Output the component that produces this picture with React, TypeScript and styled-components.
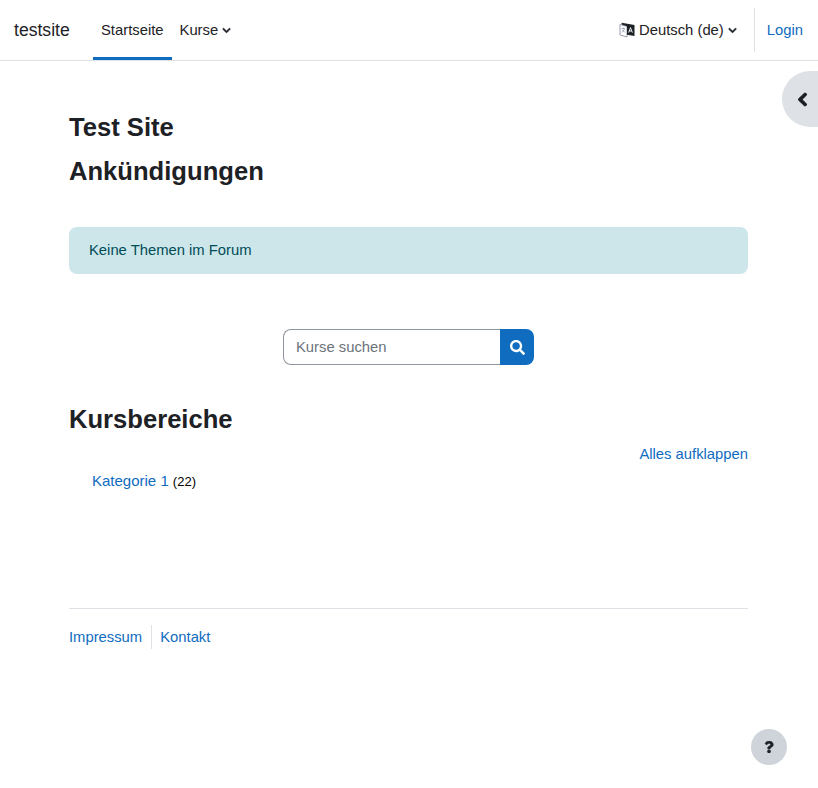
import React from 'react';
import styled, { createGlobalStyle } from 'styled-components';
import { FaChevronDown, FaChevronLeft, FaQuestion, FaSearch } from 'react-icons/fa';

const GlobalStyle = createGlobalStyle`
  html, body {
    margin: 0;
    padding: 0;
    background: #fff;
  }
  body {
    font-family: "Liberation Sans", Arial, sans-serif;
    font-size: 14.8px;
    line-height: 22.5px;
    color: #1d2125;
  }
`;

const Page = styled.div`
  position: relative;
  width: 818px;
  height: 788px;
  overflow: hidden;
`;

const Navbar = styled.nav`
  display: flex;
  align-items: stretch;
  height: 60px;
  border-bottom: 1px solid #dee2e6;
  padding-left: 14px;
`;

const Brand = styled.div`
  display: flex;
  align-items: center;
  width: 56px;
  font-size: 17.6px;
  margin-right: 23px;
`;

const NavItem = styled.div<{ $active?: boolean }>`
  display: flex;
  align-items: center;
  gap: 4px;
  padding: 3px 8px 0;
  border-bottom: 3px solid ${p => (p.$active ? '#0f6cbf' : 'transparent')};
  box-sizing: border-box;
  height: 60px;
`;

const Spacer = styled.div`
  flex: 1;
`;

const LangMenu = styled.div`
  display: flex;
  align-items: center;
  gap: 4px;
  padding-right: 17px;
`;

const LoginBox = styled.div`
  display: flex;
  align-items: center;
  align-self: center;
  height: 44px;
  padding: 0 15px 0 12px;
  border-left: 1px solid #dee2e6;
`;

const Anchor = styled.a`
  color: #0f6cbf;
  text-decoration: none;
`;

const Main = styled.main`
  padding: 51px 70px 0 69px;
`;

const Heading = styled.h2`
  margin: 0;
  font-size: 25.6px;
  line-height: 30px;
  font-weight: 700;
  color: #1d2125;
`;

const HeadingStack = styled.div`
  display: flex;
  flex-direction: column;
  gap: 14px;
`;

const Notice = styled.div`
  margin-top: 41px;
  height: 47px;
  box-sizing: border-box;
  padding: 12px 20px;
  background: #cce6ea;
  border-radius: 8px;
  color: #004c57;
`;

const SearchRow = styled.div`
  display: flex;
  justify-content: center;
  margin-top: 55px;
`;

const SearchInput = styled.input`
  box-sizing: border-box;
  width: 217px;
  height: 36px;
  padding: 0 12px;
  font: inherit;
  color: #495057;
  background: #fff;
  border: 1px solid #8f959e;
  border-right: none;
  border-radius: 8px 0 0 8px;
  outline: none;

  &::placeholder {
    color: #6a737b;
    opacity: 1;
  }
`;

const SearchButton = styled.button`
  display: flex;
  align-items: center;
  justify-content: center;
  width: 34px;
  height: 36px;
  padding: 0;
  border: none;
  color: #fff;
  background: #0f6cbf;
  border-radius: 0 8px 8px 0;
  font-size: 15px;
`;

const CategoryHeading = styled(Heading)`
  margin-top: 39px;
`;

const ExpandRow = styled.div`
  display: flex;
  justify-content: flex-end;
  margin-top: 9px;
`;

const CategoryRow = styled.div`
  padding-left: 23px;
  margin-top: 4px;
`;

const CategoryLink = styled(Anchor)`
  font-size: 15px;
`;

const CourseCount = styled.span`
  font-size: 13px;
  color: #000;
`;

const Footer = styled.footer`
  display: flex;
  align-items: center;
  margin-top: 115px;
  padding-top: 16px;
  border-top: 1px solid #dee2e6;
`;

const FooterLink = styled(Anchor)<{ $divided?: boolean }>`
  padding: 1px 9px 0 0;
  ${p => p.$divided && 'border-left: 1px solid #dee2e6; padding-left: 8px;'}
`;

const DrawerToggle = styled.div`
  position: absolute;
  top: 71px;
  right: 0;
  width: 36px;
  height: 56px;
  display: flex;
  align-items: center;
  justify-content: center;
  padding-left: 5px;
  box-sizing: border-box;
  background: #dee2e6;
  border-radius: 28px 0 0 28px;
  font-size: 15px;
  color: #1d2125;

  svg {
    stroke: currentColor;
    stroke-width: 40px;
  }
`;

const HelpButton = styled.div`
  position: absolute;
  left: 751px;
  top: 729px;
  width: 36px;
  height: 36px;
  display: flex;
  align-items: center;
  justify-content: center;
  border-radius: 50%;
  background: #ced4da;
  font-size: 12px;
  color: #1d2125;

  svg {
    stroke: currentColor;
    stroke-width: 20px;
  }
`;

const SmallChevron = styled(FaChevronDown)`
  font-size: 9px;
  stroke: currentColor;
  stroke-width: 30px;
`;

const LanguageIcon = () => (
  <svg width="16" height="16" viewBox="0 0 16 16" aria-hidden="true">
    <path d="M1 2.5 8 4.5V15L1 13Z" fill="#fff" stroke="#8d92a6" strokeWidth="0.9" />
    <path d="M2.6 6.6h3.4M4.3 5.6v1M3 10.4l2.4-3M3.4 7.6 5.8 10.4" stroke="#7f869c" strokeWidth="0.7" fill="none" />
    <path d="M2.6 0.8 15.5 3V14L8 12.8V4.3L2.6 2.4Z" fill="#1d2125" />
    <path d="M9.6 10.6 11.5 5.6 13.4 10.6M10.3 9h2.4" stroke="#fff" strokeWidth="0.9" fill="none" />
  </svg>
);

const App = () => (
  <Page>
    <GlobalStyle />
    <Navbar>
      <Brand>testsite</Brand>
      <NavItem $active>Startseite</NavItem>
      <NavItem>
        Kurse <SmallChevron />
      </NavItem>
      <Spacer />
      <LangMenu>
        <LanguageIcon />
        <span>Deutsch ‎(de)‎</span>
        <SmallChevron />
      </LangMenu>
      <LoginBox>
        <Anchor>Login</Anchor>
      </LoginBox>
    </Navbar>
    <DrawerToggle>
      <FaChevronLeft />
    </DrawerToggle>
    <Main>
      <HeadingStack>
        <Heading>Test Site</Heading>
        <Heading>Ankündigungen</Heading>
      </HeadingStack>
      <Notice>Keine Themen im Forum</Notice>
      <SearchRow>
        <SearchInput placeholder="Kurse suchen" />
        <SearchButton>
          <FaSearch />
        </SearchButton>
      </SearchRow>
      <CategoryHeading>Kursbereiche</CategoryHeading>
      <ExpandRow>
        <Anchor>Alles aufklappen</Anchor>
      </ExpandRow>
      <CategoryRow>
        <CategoryLink>Kategorie 1</CategoryLink> <CourseCount>(22)</CourseCount>
      </CategoryRow>
      <Footer>
        <FooterLink>Impressum</FooterLink>
        <FooterLink $divided>Kontakt</FooterLink>
      </Footer>
    </Main>
    <HelpButton>
      <FaQuestion />
    </HelpButton>
  </Page>
);

export default App;
